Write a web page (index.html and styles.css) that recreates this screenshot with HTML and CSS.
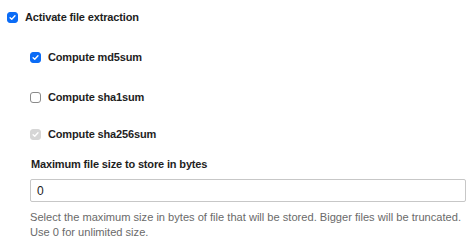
FILE: index.html
```html
<!DOCTYPE html>
<html>
<head>
<meta charset="utf-8">
<link rel="stylesheet" href="styles.css">
</head>
<body>
<div class="form">
  <label class="check top">
    <span class="box checked"><svg viewBox="0 0 12 12"><path d="M2.8 6.2 L5 8.4 L9.3 3.6"/></svg></span>
    <span class="text">Activate file extraction</span>
  </label>
  <div class="nested">
    <label class="check md5">
      <span class="box checked"><svg viewBox="0 0 12 12"><path d="M2.8 6.2 L5 8.4 L9.3 3.6"/></svg></span>
      <span class="text">Compute md5sum</span>
    </label>
    <label class="check sha1">
      <span class="box"></span>
      <span class="text">Compute sha1sum</span>
    </label>
    <label class="check sha256">
      <span class="box disabled"><svg viewBox="0 0 12 12"><path d="M2.8 6.2 L5 8.4 L9.3 3.6"/></svg></span>
      <span class="text">Compute sha256sum</span>
    </label>
    <div class="field">
      <div class="field-label">Maximum file size to store in bytes</div>
      <div class="input">0</div>
      <div class="help">Select the maximum size in bytes of file that will be stored. Bigger files will be truncated.<br>Use 0 for unlimited size.</div>
    </div>
  </div>
</div>
</body>
</html>
```
FILE: styles.css
```css
html, body {
  margin: 0;
  padding: 0;
  background: #ffffff;
}
body {
  font-family: "Liberation Sans", Arial, sans-serif;
  font-size: 12px;
  color: #1d1d1f;
}
.form {
  padding: 10px 8px 0 7px;
}
.check {
  display: flex;
  align-items: center;
  gap: 7px;
  height: 14px;
}
.text {
  font-weight: bold;
  font-size: 11px;
  letter-spacing: -0.15px;
  color: #1e1e1e;
}
.box {
  width: 11px;
  height: 11px;
  box-sizing: border-box;
  border: 1px solid #8a8a8a;
  border-radius: 3px;
  background: #fff;
  display: flex;
  align-items: center;
  justify-content: center;
}
.box svg {
  width: 11px;
  height: 11px;
}
.box svg path {
  fill: none;
  stroke: #fff;
  stroke-width: 1.8;
  stroke-linecap: round;
  stroke-linejoin: round;
}
.box.checked {
  background: #0b6cf6;
  border-color: #0b6cf6;
}
.box.disabled {
  background: #d6d6d6;
  border-color: #d6d6d6;
}
.nested {
  padding-left: 23px;
  display: flex;
  flex-direction: column;
}
.md5 {
  margin-top: 26px;
}
.sha1 {
  margin-top: 26px;
}
.sha256 {
  margin-top: 23px;
}
.field {
  display: flex;
  flex-direction: column;
  margin-top: 16px;
}
.field-label {
  font-weight: bold;
  font-size: 11px;
  letter-spacing: -0.15px;
  line-height: 14px;
  color: #1e1e1e;
  margin-left: 1px;
}
.input {
  margin-top: 8px;
  height: 23px;
  box-sizing: border-box;
  border: 1px solid #c7c7c7;
  border-radius: 2px;
  padding: 4px 6px;
  font-size: 12px;
  color: #222;
  line-height: 14px;
}
.help {
  margin-top: 8px;
  color: #6a6a6a;
  font-size: 11.1px;
  line-height: 15px;
  white-space: nowrap;
}
```
